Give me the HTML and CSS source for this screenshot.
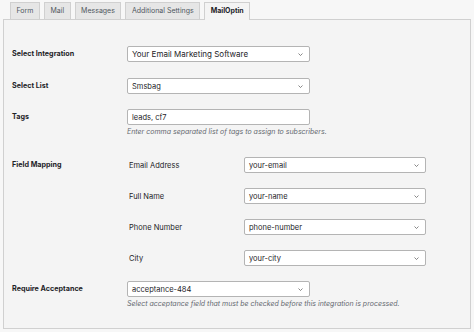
FILE: index.html
```html
<!DOCTYPE html>
<html lang="en">
<head>
    <meta charset="UTF-8">
    <title>MailOptin | Contact Form 7</title>
    <link rel="stylesheet" href="styles.css">
</head>
<body>
    <!-- Tabs -->
    <div class="tabs">
        <div class="tab">Form</div>
        <div class="tab">Mail</div>
        <div class="tab">Messages</div>
        <div class="tab">Additional Settings</div>
        <div class="tab tab-active">MailOptin</div>
    </div>

    <div class="panel">
        <!-- Select Integration -->
        <div class="row">
            <div class="row-label">Select Integration</div>
            <div class="row-field">
                <div class="select select-lg"><span>Your Email Marketing Software</span><svg class="chevron" viewBox="0 0 10 6"><path d="M1 1l4 4 4-4" /></svg></div>
            </div>
        </div>

        <!-- Select List -->
        <div class="row">
            <div class="row-label">Select List</div>
            <div class="row-field">
                <div class="select"><span>Smsbag</span><svg class="chevron" viewBox="0 0 10 6"><path d="M1 1l4 4 4-4" /></svg></div>
            </div>
        </div>

        <!-- Tags -->
        <div class="row row-tags">
            <div class="row-label">Tags</div>
            <div class="row-field">
                <div class="text-input">leads, cf7</div>
                <p class="description">Enter comma separated list of tags to assign to subscribers.</p>
            </div>
        </div>

        <!-- Field Mapping -->
        <div class="row">
            <div class="row-label">Field Mapping</div>
            <div class="row-field mapping">
                <div class="map-row">
                    <div class="map-label">Email Address</div>
                    <div class="select"><span>your-email</span><svg class="chevron" viewBox="0 0 10 6"><path d="M1 1l4 4 4-4" /></svg></div>
                </div>
                <div class="map-row">
                    <div class="map-label">Full Name</div>
                    <div class="select"><span>your-name</span><svg class="chevron" viewBox="0 0 10 6"><path d="M1 1l4 4 4-4" /></svg></div>
                </div>
                <div class="map-row">
                    <div class="map-label">Phone Number</div>
                    <div class="select"><span>phone-number</span><svg class="chevron" viewBox="0 0 10 6"><path d="M1 1l4 4 4-4" /></svg></div>
                </div>
                <div class="map-row">
                    <div class="map-label">City</div>
                    <div class="select"><span>your-city</span><svg class="chevron" viewBox="0 0 10 6"><path d="M1 1l4 4 4-4" /></svg></div>
                </div>
            </div>
        </div>

        <!-- Require Acceptance -->
        <div class="row">
            <div class="row-label">Require Acceptance</div>
            <div class="row-field">
                <div class="select"><span>acceptance-484</span><svg class="chevron" viewBox="0 0 10 6"><path d="M1 1l4 4 4-4" /></svg></div>
                <p class="description">Select acceptance field that must be checked before this integration is processed.</p>
            </div>
        </div>
    </div>
</body>
</html>
```

FILE: styles.css
```css
body {
    margin: 0;
    background-color: #f7f7f7;
    font-family: Inter, "Liberation Sans", Arial, sans-serif;
    font-size: 7.5px;
    color: #1d2327;
}

/* Tabs */
.tabs {
    display: flex;
    gap: 4px;
    padding: 2px 0 0 10px;
    height: 17px;
    position: relative;
    z-index: 1;
}

.tab {
    height: 16px;
    line-height: 16px;
    padding: 0 5.5px;
    font-size: 7px;
    background-color: #e6e6e6;
    border: 1px solid #d0d0d0;
    border-bottom: none;
    color: #50575e;
}

.tab-active {
    background-color: #f4f4f4;
    height: 17px;
    font-weight: bold;
    color: #1d2327;
}

/* Panel */
.panel {
    margin-left: 3px;
    width: 466px;
    height: 282px;
    background-color: #f4f4f4;
    border: 1px solid #d0d0d0;
    padding-top: 26px;
}

.row {
    display: flex;
    align-items: flex-start;
    margin-bottom: 15px;
}

.row:first-child {
    margin-bottom: 16px;
}

.row-tags {
    margin-bottom: 21px;
}

.row-label {
    width: 115px;
    padding-left: 8px;
    line-height: 16px;
    font-size: 7.2px;
    font-weight: bold;
}

.select, .text-input {
    box-sizing: border-box;
    width: 183px;
    height: 16px;
    background-color: white;
    border: 1px solid #b4b4b4;
    border-radius: 2px;
    padding: 0 6px 0 4px;
    display: flex;
    align-items: center;
    justify-content: space-between;
}

.select-lg span {
    font-size: 8px;
}

.chevron {
    width: 5px;
    height: 3px;
    fill: none;
    stroke: #555;
    stroke-width: 1.4;
}

.description {
    margin: 2px 0 0 0;
    font-size: 7px;
    font-style: italic;
    color: #646970;
    line-height: 9px;
}

/* Field mapping */
.mapping {
    display: flex;
    flex-direction: column;
    gap: 15px;
}

.map-row {
    display: flex;
    align-items: center;
}

.map-label {
    width: 117px;
    padding-left: 2px;
    box-sizing: border-box;
}

.map-row .select {
    width: 182px;
}
```
